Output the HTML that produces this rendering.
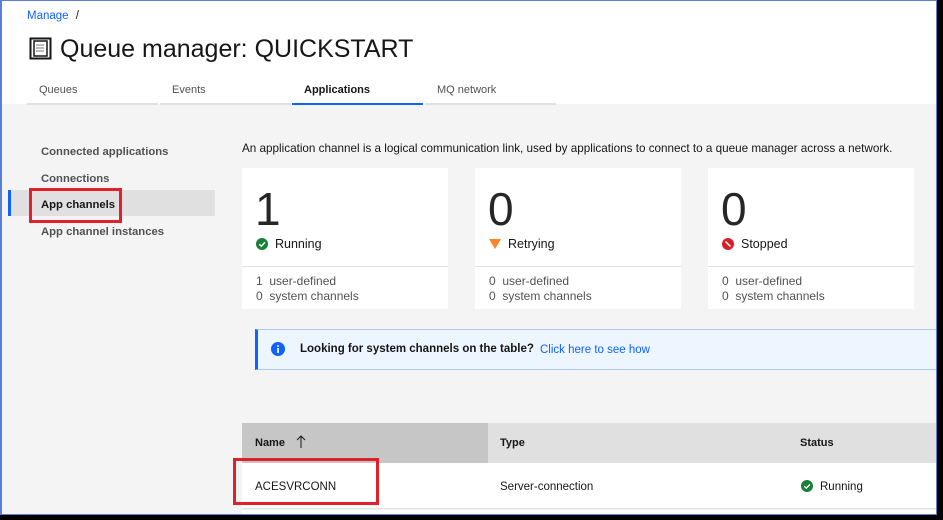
<!DOCTYPE html>
<html><head><style>
*{margin:0;padding:0;box-sizing:border-box}
body{width:943px;height:520px;overflow:hidden;font-family:"Liberation Sans",sans-serif;background:#000;position:relative}
.frame{position:absolute;left:0;top:0;width:937px;height:515px;background:#f4f4f4;border:1px solid #5b7fd1;border-left:2px solid #5b7fd1;overflow:hidden}
.abs{position:absolute}
.top{position:absolute;left:0;top:0;width:100%;height:103px;background:#fff}
.tab{position:absolute;top:83px;font-size:11px;color:#525252;width:131px;height:21px;border-bottom:2px solid #e0e0e0;padding-left:12px}
.nav{position:absolute;left:39px;font-size:11.3px;font-weight:bold;color:#525252}
.card{position:absolute;top:167px;width:206px;height:141px;background:#fff}
.num{position:absolute;left:13px;top:14px;font-size:46px;color:#262626}
.st{position:absolute;left:14px;top:69px;font-size:12.5px;color:#161616;display:flex;align-items:center;gap:7px}
.div{position:absolute;left:0;top:98px;width:100%;height:1px;background:#e0e0e0}
.sub{position:absolute;left:14px;top:106px;font-size:12px;color:#525252;line-height:15px}
.red{position:absolute;border:3px solid #e0202a}
.th{position:absolute;top:436px;font-size:11px;font-weight:bold;color:#161616;line-height:13px}
</style></head><body>
<div class="frame">
<div class="top">
<div class="abs" style="left:25px;top:9px;font-size:11.5px;color:#0f62fe">Manage <span style="color:#161616;margin-left:4px">/</span></div>
<svg class="abs" style="left:27px;top:36px" width="24" height="24" viewBox="0 0 24 24"><rect x="1.5" y="1.5" width="20" height="20" fill="none" stroke="#161616" stroke-width="2"/><rect x="5" y="4" width="13" height="15" fill="none" stroke="#161616" stroke-width="1.5"/><path d="M7 8h8M7 11h8M7 14h8" stroke="#777" stroke-width="1"/></svg>
<div class="abs" style="left:58px;top:34px;font-size:25px;color:#161616">Queue manager: QUICKSTART</div>
<div class="tab" style="left:25px">Queues</div>
<div class="tab" style="left:158px">Events</div>
<div class="tab" style="left:290px;color:#161616;font-weight:bold;border-bottom-color:#0f62fe">Applications</div>
<div class="tab" style="left:423px">MQ network</div>
</div>
<div class="nav" style="top:145px">Connected applications</div>
<div class="nav" style="top:172px">Connections</div>
<div class="abs" style="left:6px;top:189px;width:207px;height:26px;background:#e0e0e0;border-left:3px solid #0f62fe"></div>
<div class="nav" style="top:198px;color:#161616">App channels</div>
<div class="nav" style="top:225px">App channel instances</div>
<div class="abs" style="left:240px;top:141px;font-size:11.7px;color:#161616">An application channel is a logical communication link, used by applications to connect to a queue manager across a network.</div>
<div class="card" style="left:240px"><div class="num">1</div><div class="st"><svg width="12" height="12"><circle cx="6" cy="6" r="6" fill="#198038"/><path d="M3.3 6.2l2 2 3.6-3.8" stroke="#fff" stroke-width="1.4" fill="none"/></svg>Running</div><div class="div"></div><div class="sub">1&nbsp; user-defined<br>0&nbsp; system channels</div></div>
<div class="card" style="left:473px"><div class="num">0</div><div class="st"><svg width="12" height="12"><path d="M0 1h12L6 11z" fill="#ff832b"/></svg>Retrying</div><div class="div"></div><div class="sub">0&nbsp; user-defined<br>0&nbsp; system channels</div></div>
<div class="card" style="left:706px"><div class="num">0</div><div class="st"><svg width="12" height="12"><circle cx="6" cy="6" r="6" fill="#da1e28"/><path d="M3.5 3.5l5 5" stroke="#fff" stroke-width="1.5"/></svg>Stopped</div><div class="div"></div><div class="sub">0&nbsp; user-defined<br>0&nbsp; system channels</div></div>
<div class="abs" style="left:253px;top:328px;width:690px;height:41px;background:#edf5ff;border:1px solid #a6c8ff;border-left:3px solid #0f62fe;border-right:none"></div>
<svg class="abs" style="left:269px;top:341px" width="14" height="14"><circle cx="7" cy="7" r="7" fill="#0f62fe"/><rect x="6.2" y="6" width="1.7" height="5" fill="#fff"/><circle cx="7" cy="4" r="1" fill="#fff"/></svg>
<div class="abs" style="left:298px;top:342px;font-size:11.5px;font-weight:bold;color:#161616">Looking for system channels on the table?</div>
<div class="abs" style="left:538px;top:343px;font-size:11.5px;color:#0f62fe">Click here to see how</div>
<div class="abs" style="left:240px;top:422px;width:700px;height:40px;background:#e0e0e0"></div>
<div class="abs" style="left:240px;top:422px;width:246px;height:40px;background:#c6c6c6"></div>
<div class="th" style="left:253px">Name</div>
<svg class="abs" style="left:294px;top:434px" width="10" height="14"><path d="M5 1v12M1 5l4-4 4 4" stroke="#161616" stroke-width="1" fill="none"/></svg>
<div class="th" style="left:498px">Type</div>
<div class="th" style="left:798px">Status</div>
<div class="abs" style="left:240px;top:462px;width:700px;height:46px;background:#fff;border-bottom:1px solid #e0e0e0"></div>
<div class="abs" style="left:240px;top:509px;width:700px;height:10px;background:#fff"></div>
<div class="abs" style="left:253px;top:480px;font-size:11.5px;color:#161616">ACESVRCONN</div>
<div class="abs" style="left:498px;top:480px;font-size:11.5px;color:#161616">Server-connection</div>
<svg class="abs" style="left:799px;top:479px" width="12" height="12"><circle cx="6" cy="6" r="6" fill="#198038"/><path d="M3.3 6.2l2 2 3.6-3.8" stroke="#fff" stroke-width="1.4" fill="none"/></svg>
<div class="abs" style="left:818px;top:480px;font-size:11.5px;color:#161616">Running</div>
<div class="red" style="left:27px;top:187px;width:93px;height:35px"></div>
<div class="red" style="left:231px;top:457px;width:146px;height:47px"></div>
</div>
</body></html>
